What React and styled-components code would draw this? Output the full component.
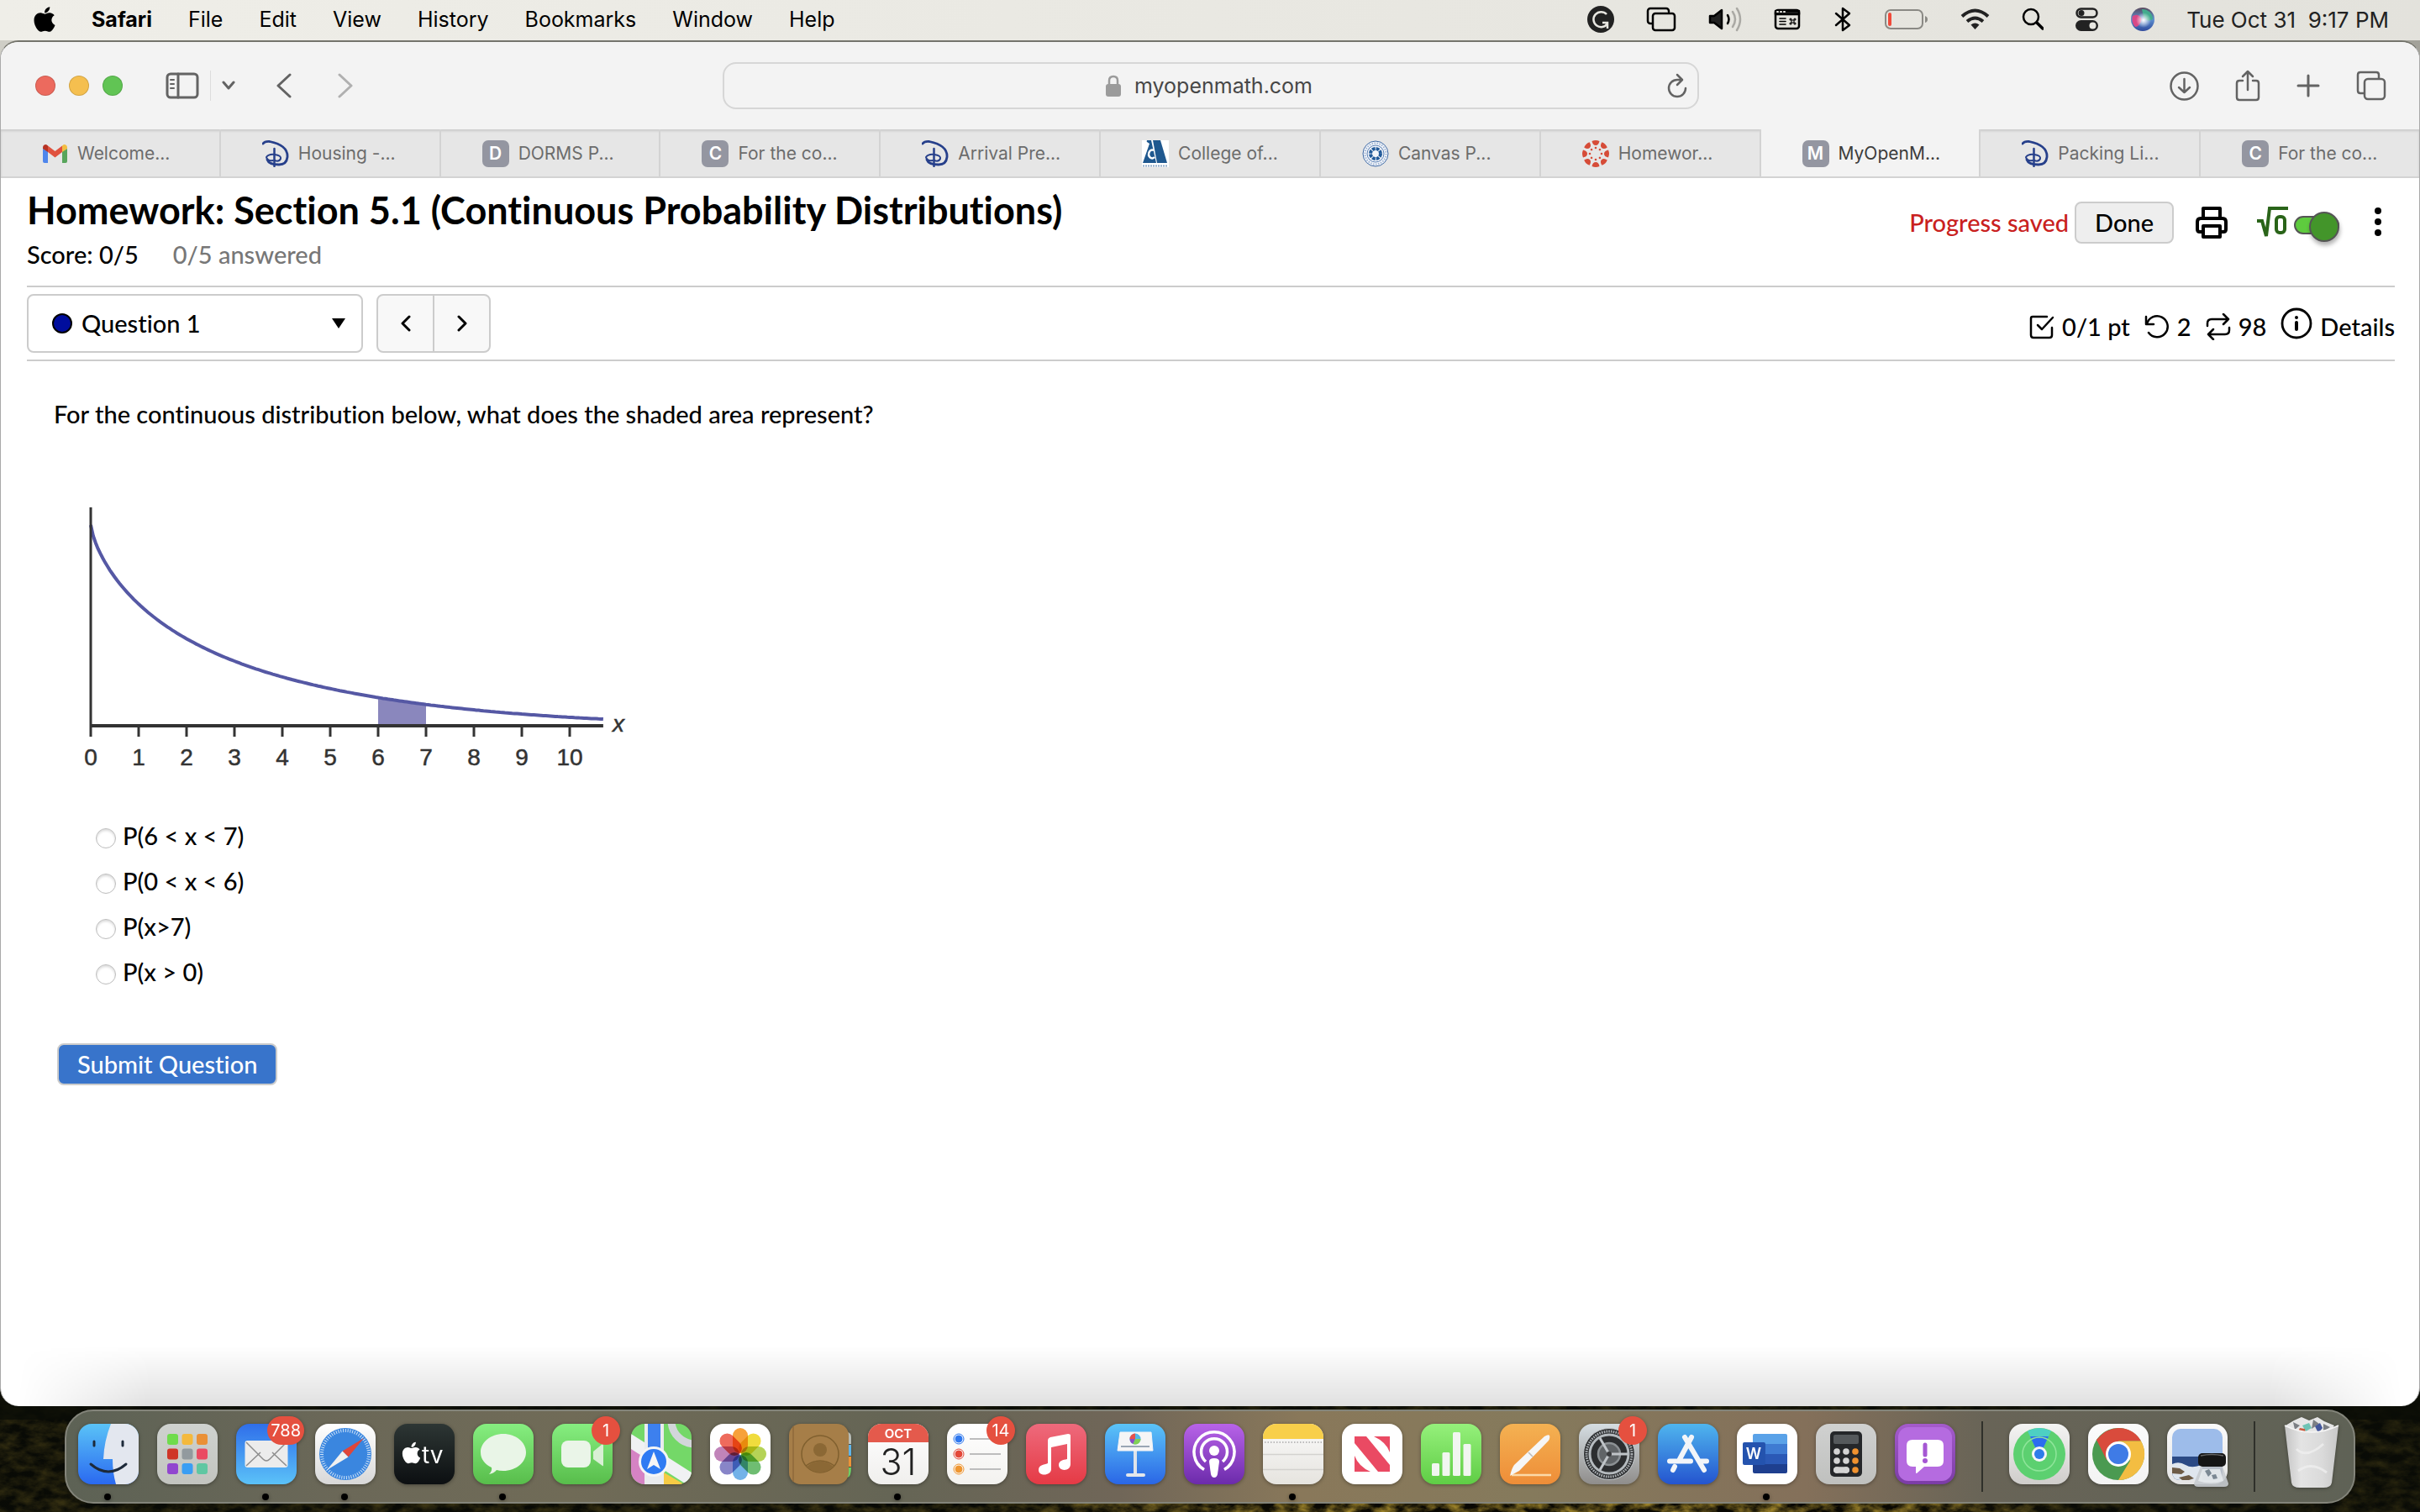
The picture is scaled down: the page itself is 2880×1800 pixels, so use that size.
import { useState } from "react";
import styled, { createGlobalStyle, css } from "styled-components";
import { FaApple } from "react-icons/fa";

const GlobalStyle = createGlobalStyle`
  * {
    box-sizing: border-box;
  }

  body {
    margin: 0;
    background: #10130a;
    font-family: "Inter", "Liberation Sans", sans-serif;
    color: #000;
  }

  button, input, select {
    font: inherit;
    color: inherit;
  }

  button {
    cursor: pointer;
  }
`;

const Desktop = styled.div`
  position: relative;
  isolation: isolate;
  min-height: 100vh;
  display: flex;
  flex-direction: column;
  background: linear-gradient(90deg, #cfcec6, #b9b8b0 60%, #a3a29a) top / 100% 80px
    no-repeat;
`;

const Wallpaper = styled.svg`
  position: absolute;
  z-index: -1;
  bottom: 0;
  left: 0;
  width: 100%;
  height: 160px;
`;

/* Menu bar */

const MenuBar = styled.header`
  height: 48px;
  padding: 0 37px 2px 40px;
  display: flex;
  align-items: center;
  justify-content: space-between;
  background: linear-gradient(90deg, #efeee8, #e3e2dc);
  font-size: 25px;
`;

const MenuGroup = styled.div`
  display: flex;
  align-items: center;
  gap: ${(props) => props.$gap}px;
  white-space: pre;
`;

const MenuItem = styled.button`
  display: flex;
  padding: 0;
  border: none;
  background: none;
  line-height: 30px;
  font-weight: ${(props) => (props.$bold ? 700 : 400)};

  & svg {
    width: 26px;
    height: 34px;
  }
`;

const Clock = styled.time`
  color: #222;
  font-size: 26px;
`;

/* Browser window */

const Window = styled.div`
  position: relative;
  flex: 1;
  display: flex;
  flex-direction: column;
  overflow: hidden;
  border: 1px solid #a9a9a9;
  border-top: 2px solid #74746c;
  border-bottom: none;
  border-radius: 22px;
  background: #fff;

  /* The dock throws a shade on the bottom of the window */
  &::after {
    content: "";
    position: absolute;
    left: 0;
    right: 0;
    bottom: 0;
    height: 72px;
    pointer-events: none;
    background: linear-gradient(rgba(0, 0, 0, 0), rgba(0, 0, 0, 0.12));
    mask-image: linear-gradient(
      90deg,
      transparent 20px,
      #000 180px,
      #000 calc(100% - 180px),
      transparent calc(100% - 20px)
    );
  }
`;

const Toolbar = styled.div`
  height: 104px;
  padding: 0 39px 0 41px;
  display: grid;
  grid-template-columns: 1fr minmax(400px, 1162px) 1fr;
  align-items: center;
  background: #f3f3f3;
  color: #636363;
`;

const ToolGroup = styled.div`
  display: flex;
  align-items: center;
  justify-content: ${(props) => (props.$end ? "flex-end" : "flex-start")};
  gap: ${(props) => props.$gap}px;
`;

const Lights = styled.div`
  display: flex;
  gap: 16px;
  margin-right: 38px;
`;

const Light = styled.button`
  width: 24px;
  height: 24px;
  padding: 0;
  border: 1px solid rgba(0, 0, 0, 0.14);
  border-radius: 50%;
  background: ${(props) => props.$color};
`;

const ToolButton = styled.button`
  display: flex;
  padding: 0;
  border: none;
  background: none;
  color: ${(props) => (props.$dim ? "#b0b0b0" : "#636363")};
`;

const ToolDivider = styled.span`
  width: 1px;
  height: 36px;
  background: #dcdcdc;
`;

const AddressBar = styled.div`
  height: 56px;
  padding: 0 10px;
  display: grid;
  grid-template-columns: 1fr auto 1fr;
  align-items: center;
  border: 2px solid #d6d6d6;
  border-radius: 16px;
`;

const Address = styled.label`
  grid-column: 2;
  display: flex;
  align-items: center;
  gap: 16px;
`;

const AddressInput = styled.input`
  width: 216px;
  padding: 0;
  border: none;
  outline: none;
  background: none;
  color: #474747;
  font-size: 25px;
  line-height: 30px;
`;

const ReloadButton = styled(ToolButton)`
  justify-self: end;
`;

const TabBar = styled.nav`
  height: 58px;
  display: flex;
  background: #e6e6e6;
  border-bottom: 2px solid #d3d3d3;
  box-shadow: inset 0 2px 3px rgba(0, 0, 0, 0.12);
`;

const Tab = styled.button`
  flex: 1 1 0;
  min-width: 0;
  display: flex;
  align-items: center;
  gap: 11px;
  padding: 2px 0 0 49px;
  border: none;
  border-right: 2px solid #d3d3d3;
  background: none;
  color: #6c6c6c;
  font-size: 21px;
  line-height: 28px;
  white-space: nowrap;

  &:last-child {
    border-right: none;
  }

  ${(props) =>
    props.$active &&
    css`
      background: #f3f3f3;
      color: #3c3c3c;
    `}
`;

const LetterIcon = styled.span`
  width: 32px;
  height: 32px;
  border-radius: 7px;
  background: #9496a1;
  color: #fff;
  font-weight: 600;
  line-height: 32px;
  text-align: center;
`;

/* Homework page */

const Page = styled.main`
  flex: 1;
  padding: 0 29px 0 31px;
  font-family: "Lato", "Liberation Sans", sans-serif;
  font-size: 29px;
  font-weight: 500;
  font-variant-ligatures: none;
  line-height: 36px;
`;

const PageHeader = styled.div`
  display: flex;
  justify-content: space-between;
  padding: 10px 0 19px;
  border-bottom: 2px solid #ccc;
`;

const Title = styled.h1`
  margin: 0 0 7px;
  font-size: 45px;
  font-weight: 700;
  line-height: 56px;
`;

const Score = styled.div`
  display: flex;
  gap: 41px;
`;

const Answered = styled.span`
  color: #777;
`;

const Actions = styled.div`
  height: 50px;
  margin-top: 18px;
  padding-right: 16px;
  display: flex;
  align-items: center;
`;

const Saved = styled.span`
  margin-right: 7px;
  color: #c9211e;
`;

const Button = styled.button`
  height: 50px;
  padding: 0 22px;
  border: 2px solid #ccc;
  border-radius: 8px;
  background: ${(props) => (props.$primary ? "#3874cb" : "#eee")};
  color: ${(props) => (props.$primary ? "#fff" : "#000")};
`;

const IconButton = styled.button`
  display: flex;
  padding: 0;
  border: none;
  background: none;
`;

const PrintButton = styled(IconButton)`
  margin: 0 35px 0 26px;
`;

const MathToggle = styled.label`
  display: flex;
  align-items: center;
  gap: 6px;
  margin-right: 42px;
`;

const Switch = styled.input`
  appearance: none;
  position: relative;
  width: 54px;
  height: 22px;
  margin: 6px 0 0;
  border: 2px solid #555;
  border-radius: 12px;
  background: #5ecb3e;

  &::before {
    content: "";
    position: absolute;
    top: -7px;
    right: -2px;
    width: 32px;
    height: 32px;
    border: 2px solid #555;
    border-radius: 50%;
    background: #43952a;
    box-shadow: 1px 4px 5px rgba(0, 0, 0, 0.3);
  }
`;

const QuestionBar = styled.div`
  display: flex;
  align-items: center;
  gap: 16px;
  padding: 8px 0;
  border-bottom: 2px solid #ccc;
`;

const QuestionPicker = styled.label`
  width: 400px;
  height: 70px;
  padding: 0 19px 0 28px;
  display: flex;
  align-items: center;
  gap: 11px;
  border: 2px solid #ccc;
  border-radius: 8px;
`;

const QuestionSelect = styled.select`
  appearance: none;
  flex: 1;
  min-width: 0;
  padding: 0;
  border: none;
  outline: none;
  background: none;
`;

const StatusDot = styled.span`
  width: 24px;
  height: 24px;
  border: 2px solid #000;
  border-radius: 50%;
  background: #000d9d;
`;

const Pager = styled.div`
  display: flex;
  height: 70px;
  border: 2px solid #ccc;
  border-radius: 8px;
  background: #f8f8f8;
`;

const PagerButton = styled.button`
  width: 65px;
  display: flex;
  align-items: center;
  justify-content: center;
  padding: 0;
  border: none;
  background: none;

  & + & {
    width: 67px;
    border-left: 2px solid #ccc;
  }
`;

const Meta = styled.div`
  margin-left: auto;
  padding-top: 8px;
  display: flex;
  align-items: center;
  gap: 17px;
`;

const MetaItem = styled.span`
  display: flex;
  align-items: center;
  gap: 9px;
`;

const DetailsLink = styled.a`
  display: flex;
  align-items: center;
  gap: 9px;
  color: inherit;
  text-decoration: none;

  & svg {
    margin-bottom: 8px;
  }
`;

const Question = styled.form`
  padding: 45px 32px 60px;
  display: flex;
  flex-direction: column;
  align-items: flex-start;
`;

const Prompt = styled.p`
  margin: 0 0 79px;
`;

const Graph = styled.svg`
  width: 700px;
  height: 330px;
  font-family: "Liberation Sans", sans-serif;
  font-size: 28px;
  font-weight: 400;
`;

const Choices = styled.ul`
  margin: 48px 0 58px;
  padding: 0 0 0 50px;
  list-style: none;
`;

const Choice = styled.label`
  height: 54px;
  display: flex;
  align-items: center;
  gap: 8px;
`;

const Radio = styled.input`
  appearance: none;
  width: 24px;
  height: 24px;
  margin: 6px 0 0;
  border: 1px solid #bdbdbd;
  border-radius: 50%;
  background: #fff;
  box-shadow: inset 0 2px 3px rgba(0, 0, 0, 0.15);

  &:checked {
    border: 7px solid #3874cb;
  }
`;

const SubmitRow = styled.div`
  padding-left: 4px;
`;

/* Dock */

const DockArea = styled.footer`
  display: flex;
  justify-content: center;
  padding: 4px 0 10px;
`;

const DockBar = styled.div`
  display: flex;
  align-items: flex-start;
  gap: 22px;
  height: 112px;
  padding: 15px 14px 0;
  border: 2px solid #83847a;
  border-radius: 34px;
  background: linear-gradient(
    90deg,
    #5d6255,
    #6b6858 12%,
    #706b57 22%,
    #656555 36%,
    #706658 46%,
    #89785a 54%,
    #857a5c 64%,
    #84705a 76%,
    #686457 84%,
    #5f6256
  );
`;

const DockItem = styled.button`
  position: relative;
  display: flex;
  width: 72px;
  height: 72px;
  padding: 0;
  border: none;
  background: none;
  filter: drop-shadow(0 1px 2px rgba(0, 0, 0, 0.35));

  & > svg {
    width: 72px;
    height: 72px;
    overflow: visible;
  }
`;

const Badge = styled.span`
  position: absolute;
  top: -9px;
  right: -9px;
  min-width: 34px;
  height: 34px;
  padding: 0 4px;
  border-radius: 17px;
  background: #e5503f;
  color: #fff;
  font-size: 20px;
  line-height: 34px;
  text-align: center;
`;

const RunningDot = styled.span`
  position: absolute;
  left: 31px;
  bottom: -19px;
  width: 8px;
  height: 8px;
  border-radius: 50%;
  background: #000;
`;

const DockDivider = styled.span`
  width: 2px;
  height: 84px;
  margin: -3px 9px 0;
  background: #2f302a;
`;

/* Small line icons */

function Line({ w, h, box, stroke = 3, children }) {
  return (
    <svg
      width={w}
      height={h}
      viewBox={box || `0 0 ${w} ${h}`}
      fill="none"
      stroke="currentColor"
      strokeWidth={stroke}
      strokeLinecap="round"
      strokeLinejoin="round"
      aria-hidden="true"
    >
      {children}
    </svg>
  );
}

function StatusIcons() {
  return (
    <>
      <svg width="32" height="32" viewBox="0 0 32 32">
        <circle cx="16" cy="16" r="16" fill="#222" />
        <path
          d="M23 10A9 9 0 1 0 24 21M24 27V20H18"
          fill="none"
          stroke="#e8e7e1"
          strokeWidth="2.5"
        />
      </svg>
      <Line w={36} h={30} stroke={2.5}>
        <path d="M7 20H5a3 3 0 0 1-3-3V5a3 3 0 0 1 3-3h19a3 3 0 0 1 3 3v1" />
        <rect x="8" y="8" width="26" height="20" rx="3" />
      </Line>
      <Line w={40} h={30} stroke={2.5}>
        <path d="M2 11h5l9-7v22l-9-7H2z" fill="#222" />
        <path d="M23 10q3 5 0 10" />
        <path d="M29 6q6 9 0 18M34 2q8 13 0 26" stroke="#aaa9a4" />
      </Line>
      <Line w={32} h={26} stroke={2.5}>
        <rect x="2" y="2" width="28" height="22" rx="3" />
        <path d="M2 3h28v4H2z" fill="#222" />
        <path d="M4 4h1M8 4h1M12 4h1" stroke="#e8e7e1" strokeWidth="2" />
        <path d="M7 12h7M7 15.5h7M7 19h7" strokeWidth="1.6" />
        <path
          d="M21 14h3v3h-3zM21 14v-1a1 1 0 1 0-1 1zM24 14h1a1 1 0 1 0-1-1zM24 17v1a1 1 0 1 0 1-1zM21 17h-1a1 1 0 1 0 1 1z"
          strokeWidth="1.1"
        />
      </Line>
      <Line w={24} h={30} stroke={2.5}>
        <path d="M4 8 20 22 12 28V2L20 8 4 22" />
      </Line>
      <svg width="52" height="26" viewBox="0 0 52 26">
        <rect x="1" y="2" width="44" height="22" rx="6" fill="none" stroke="#8a8984" strokeWidth="2" />
        <path d="M48 9q3 1 3 4t-3 4z" fill="#8a8984" />
        <rect x="4" y="5" width="4" height="16" rx="2" fill="#f04a3a" />
      </svg>
      <svg width="35" height="26" viewBox="0 0 35 26" fill="none" stroke="#222" strokeWidth="4">
        <path d="M2 9.500q15.500-14 31 0M8 15.500q9.500-8 19 0" />
        <path d="M12.500 19.500q5-4 10 0l-5 5.500z" fill="#222" stroke="none" />
      </svg>
      <Line w={26} h={28} stroke={2.5}>
        <circle cx="11" cy="11" r="9" />
        <path d="m18 18 7 7" strokeWidth="3.5" />
      </Line>
      <svg width="28" height="28" viewBox="0 0 28 28">
        <rect x="1.5" y="1.5" width="24" height="10" rx="5" fill="none" stroke="#222" strokeWidth="2.5" />
        <circle cx="7" cy="6.5" r="3.5" fill="#222" />
        <rect x="0" y="15" width="27" height="13" rx="6.5" fill="#222" />
        <circle cx="20.5" cy="21.5" r="4" fill="#e8e7e1" />
      </svg>
      <svg width="28" height="28" viewBox="0 0 28 28">
        <defs>
          <linearGradient id="siri" x1="0" y1="0" x2="0" y2="1">
            <stop offset="0" stopColor="#5a4a5e" />
            <stop offset="0.5" stopColor="#5d8fd0" />
            <stop offset="1" stopColor="#2f4a9c" />
          </linearGradient>
          <radialGradient id="siriGlow">
            <stop offset="0" stopColor="#fff" />
            <stop offset="1" stopColor="#fff" stopOpacity="0" />
          </radialGradient>
        </defs>
        <circle cx="14" cy="14" r="14" fill="url(#siri)" />
        <path d="M13 2a12 12 0 0 1 13 12q-7 4-11-3z" fill="#43ab8e" />
        <path d="M2 10q7-4 11 4-3 9-8 9-5-6-3-13z" fill="#d84886" />
        <circle cx="15" cy="15" r="9" fill="url(#siriGlow)" />
      </svg>
    </>
  );
}

/* Tab icons */

function Gmail() {
  return (
    <svg width="31" height="32" viewBox="0 0 31 32">
      <path d="M1 10v15a2 2 0 0 0 2 2h4V13z" fill="#4f86ec" />
      <path d="M30 10v15a2 2 0 0 1-2 2h-4V13z" fill="#58a55c" />
      <path d="M7 6.500 15.500 13 24 6.500V14L15.500 20.500 7 14z" fill="#e0523f" />
      <path d="M1 9q0-4 4-4l2 1.500V14L1 10z" fill="#b63324" />
      <path d="M30 9q0-4-4-4l-2 1.500V14l6-4z" fill="#f2bd42" />
    </svg>
  );
}

function Disney() {
  return (
    <svg width="32" height="32" viewBox="0 0 32 32" fill="none" stroke="#27408b" strokeLinecap="round">
      <path d="M1 4Q3 1 9 1.500 31 6 30 20 29 29 20 29 8 29 6 23" strokeWidth="2.8" />
      <path d="M14.500 10v21" strokeWidth="2.5" />
      <path d="M5 20q3-4 10-3 8 1 7 5-2 4-7 2M5 20q1 5 8 4" strokeWidth="2" />
    </svg>
  );
}

function College() {
  return (
    <svg width="32" height="32" viewBox="0 0 32 32">
      <path d="M0 0h32v32H0z" fill="#fff" />
      <path d="M13 0h9l8 27H18z" fill="#1f588f" />
      <path d="M3 0h8l6 27H1L9 4z" fill="#1f588f" />
      <path d="M0 0h6L1 22z" fill="#fff" />
      <path d="M14 12a4 5 0 1 0 1 8" fill="none" stroke="#fff" strokeWidth="2.5" />
      <path d="M1 30.500h30" stroke="#8fa9c6" strokeWidth="2" strokeDasharray="2 1" />
    </svg>
  );
}

function Seal() {
  return (
    <svg width="32" height="32" viewBox="0 0 32 32" fill="none">
      <circle cx="16" cy="16" r="15" fill="#f2f5fa" stroke="#3f69a4" />
      <circle cx="16" cy="16" r="12.5" stroke="#9db3d2" strokeWidth="2" strokeDasharray="1.5 1.5" />
      <circle cx="16" cy="16" r="10" stroke="#5a80b5" />
      <circle cx="16" cy="16" r="6" stroke="#225a9a" strokeWidth="4" strokeDasharray="3.7 1" />
    </svg>
  );
}

function Canvas() {
  const spokes = [0, 45, 90, 135, 180, 225, 270, 315];
  return (
    <svg width="32" height="32" viewBox="0 0 32 32" fill="#d64c38">
      {spokes.map((a) => (
        <g key={a} transform={`rotate(${a} 16 16)`}>
          <path d="M11.500 1Q16-1 20.500 1 19.500 6 16 6T11.500 1z" />
          <circle cx="16" cy="9" r="1.3" />
        </g>
      ))}
    </svg>
  );
}

/* Distribution graph */

const UNIT = 57;
const ORIGIN = { x: 44, y: 274 };
const END = 10.7;

const plotX = (v) => ORIGIN.x + v * UNIT;
const plotY = (v) =>
  ORIGIN.y - 239 * Math.exp(-0.5 * Math.pow(v, 0.735) - 0.00045 * v * v * v);

function curve(from, to) {
  const points = [];
  for (let v = from; v < to; v += 0.05) {
    points.push(`${plotX(v).toFixed(1)},${plotY(v).toFixed(1)}`);
  }
  points.push(`${plotX(to).toFixed(1)},${plotY(to).toFixed(1)}`);
  return `M${points.join("L")}`;
}

function DistributionGraph() {
  const ticks = Array.from({ length: 11 }, (_, i) => i);
  return (
    <Graph viewBox="0 0 700 330" role="img" aria-label="x">
      <path d={`${curve(6, 7)}V${ORIGIN.y}H${plotX(6)}z`} fill="#8a87bd" />
      <path d={curve(0, END)} fill="none" stroke="#5558a4" strokeWidth="4" />
      <g stroke="#333" strokeWidth="3">
        <path d={`M${ORIGIN.x} 14V${ORIGIN.y}`} fill="none" />
        <path d={`M${ORIGIN.x} ${ORIGIN.y}H${plotX(END)}`} strokeWidth="4" />
        {ticks.map((t) => (
          <path key={t} d={`M${plotX(t)} 274v13`} />
        ))}
      </g>
      <g fill="#333" stroke="#333" strokeWidth="0.5">
        {ticks.map((t) => (
          <text key={t} x={plotX(t)} y="321" textAnchor="middle">
            {t}
          </text>
        ))}
        <text x="665" y="281" fontStyle="italic">
          x
        </text>
      </g>
    </Graph>
  );
}

/* Dock icons, all on a 72px tile */

function Tile({ from, to = from, id, children }) {
  return (
    <svg viewBox="0 0 72 72">
      <defs>
        <linearGradient id={id} x1="0" y1="0" x2="0" y2="1">
          <stop offset="0" stopColor={from} />
          <stop offset="1" stopColor={to} />
        </linearGradient>
        <clipPath id={`${id}-clip`}>
          <rect width="72" height="72" rx="16" />
        </clipPath>
      </defs>
      <rect width="72" height="72" rx="16" fill={`url(#${id})`} />
      {children}
    </svg>
  );
}

const Finder = () => (
  <Tile id="finder" from="#5ac3f7" to="#2a69f0">
    <path
      d="M39 0Q31 20 30 42h11q0 16 4 30h27V0z"
      fill="#e3e7ef"
      clipPath="url(#finder-clip)"
    />
    <g fill="none" stroke="#1d2a3a" strokeWidth="3" strokeLinecap="round">
      <path d="M19 21v5M53 21v5" />
      <path d="M15 48q21 18 42 0" />
    </g>
  </Tile>
);

const Launchpad = () => {
  const colors = [
    "#6fdc4c", "#f4b93c", "#ea9036",
    "#cf3527", "#929a9e", "#ea4b62",
    "#9146cf", "#3a9ef3", "#5fc7a2",
  ];
  return (
    <Tile id="launchpad" from="#cfd2cf" to="#c2c4bf">
      {colors.map((c, i) => (
        <rect
          key={c}
          x={12 + (i % 3) * 17.5}
          y={12 + Math.floor(i / 3) * 17.5}
          width="13"
          height="13"
          rx="3"
          fill={c}
        />
      ))}
    </Tile>
  );
};

const Mail = () => (
  <Tile id="mail" from="#2f6eea" to="#5bc2f8">
    <rect x="10.5" y="20" width="51" height="32" rx="3" fill="#ececec" />
    <path
      d="m12 50 17-16M60 50 43 34M12 22l20 20q4 4 8 0l20-20"
      fill="none"
      stroke="#8d8d8d"
      strokeWidth="1.5"
    />
  </Tile>
);

const SafariIcon = () => (
  <Tile id="safari" from="#fff" to="#d8d8d8">
    <circle cx="36" cy="36" r="31" fill="#3a86df" />
    <circle cx="36" cy="36" r="28" fill="none" stroke="#cfe3f8" strokeWidth="4" strokeDasharray="1 1.8" />
    <path d="m58 17-25.500 15.500 7 7z" fill="#e0463a" />
    <path d="m14 55 18.500-22.500 7 7z" fill="#f0f0f0" />
  </Tile>
);

const TvIcon = () => (
  <Tile id="tv" from="#2d3634" to="#0c0f11">
    <FaApple x="6" y="20" size={29} color="#fff" />
    <text x="33" y="47" fill="#fff" fontSize="28">
      tv
    </text>
  </Tile>
);

const Messages = () => (
  <Tile id="messages" from="#86ee80" to="#58bd4b">
    <path d="M36 12c15 0 27 10 27 22S51 56 36 56q-5 0-8-1-3 4-9 5 4-4 3-8C14 48 9 42 9 34c0-12 12-22 27-22z" fill="#e9f5e7" />
  </Tile>
);

const FaceTime = () => (
  <Tile id="facetime" from="#86ee80" to="#58bd4b">
    <rect x="11" y="20" width="35" height="32" rx="8" fill="#eaf5e8" />
    <path d="M49 33 60 24q1 0 1 2v23q0 2-1 1L49 42z" fill="#d8efd4" />
  </Tile>
);

const MapsIcon = () => (
  <Tile id="maps" from="#74d868">
    <g clipPath="url(#maps-clip)">
      <path d="M0 28 72 84H0z" fill="#d583c4" />
      <path d="M0 12 72 58v18L0 30z" fill="#f0f1f3" />
      <path d="M16 0h23v72H16z" fill="#e9ebee" />
      <path d="M39 58l24 14H39z" fill="#f6cb45" />
      <path d="M20 0h15v40H20z" fill="#3d80ee" />
      <circle cx="76" cy="-4" r="28" fill="none" stroke="#d2d6da" strokeWidth="9" />
    </g>
    <circle cx="27" cy="45" r="18" fill="#f4f5f6" />
    <circle cx="27" cy="45" r="15" fill="#2f7bf3" />
    <path d="m27 33 8 21-8-5-8 5z" fill="#f6f6f6" />
  </Tile>
);

const PetalGroup = styled.g`
  isolation: isolate;

  & rect {
    mix-blend-mode: multiply;
  }
`;

const Photos = () => {
  const petals = [
    "#f7a13a", "#f0dc3d", "#b5d356", "#6fbd72",
    "#73b2e8", "#8885c8", "#c184b9", "#ee6b5c",
  ];
  return (
    <Tile id="photos" from="#fff">
      <PetalGroup>
        {petals.map((c, i) => (
          <rect
            key={c}
            x="27"
            y="5"
            width="18"
            height="30"
            rx="9"
            fill={c}
            transform={`rotate(${i * 45} 36 36)`}
          />
        ))}
      </PetalGroup>
    </Tile>
  );
};

const Contacts = () => (
  <svg viewBox="0 0 72 72">
    <path d="M60 10h10q4 1 4 6v8H60z" fill="#b7bcb6" />
    <path d="M60 25h14v13H60z" fill="#5fb4e8" />
    <path d="M60 39h14v12H60z" fill="#ed9337" />
    <path d="M60 52h14q0 12-5 12h-9z" fill="#6ccf65" />
    <rect width="71" height="72" rx="14" fill="#a67e48" />
    <path d="M5 3v66" stroke="#8e6a3b" strokeWidth="1.5" />
    <g fill="none" stroke="#80602f" strokeWidth="1.5">
      <circle cx="37" cy="36" r="22" />
      <path d="M20 50q17-12 34 0" />
    </g>
    <circle cx="37" cy="31" r="8" fill="#8b6835" />
    <path d="M21 51q16-13 32 0-16 14-32 0z" fill="#8b6835" />
  </svg>
);

const CalendarIcon = () => (
  <Tile id="calendar" from="#fff" to="#f0efed">
    <path d="M0 0h72v22H0z" fill="#e45a4c" clipPath="url(#calendar-clip)" />
    <text x="36" y="17" textAnchor="middle" fill="#fff" fontSize="15" fontWeight="600">
      OCT
    </text>
    <text x="36" y="61" textAnchor="middle" fill="#222" fontSize="43" fontWeight="300">
      31
    </text>
  </Tile>
);

const Reminders = () => (
  <Tile id="reminders" from="#fff" to="#f3f2ef">
    {["#2f78ee", "#e34839", "#ee9632"].map((c, i) => (
      <g key={c}>
        <circle cx="14" cy={18 + i * 18} r="5" fill={c} stroke="#fff" />
        <circle cx="14" cy={18 + i * 18} r="6" fill="none" stroke={c} />
        <path d={`M27 ${18 + i * 18}h37`} stroke="#bdbdbd" strokeWidth="2" />
      </g>
    ))}
  </Tile>
);

const Music = () => (
  <Tile id="music" from="#ee6a7c" to="#e53a45">
    <path
      d="M26 20q0-3 3-4l21-4q3 0 3 2v34c0 9-14 9-14 1 0-5 5-6 10-7V24l-19 4v26c0 8-15 9-15 1 0-6 6-6 11-8z"
      fill="#fff"
    />
  </Tile>
);

const Keynote = () => (
  <Tile id="keynote" from="#5bc4f8" to="#2a66e6">
    <path d="M36 32v28" stroke="#dfe4ea" strokeWidth="4" />
    <rect x="25" y="59" width="23" height="4" rx="2" fill="#e4e7eb" />
    <path d="M18 10h37l2 22H15z" fill="#f5f5f6" stroke="#f5f5f6" strokeWidth="1" />
    <path d="M19 27h34" stroke="#9aa5b4" strokeWidth="2" />
    <circle cx="36" cy="18" r="6.5" fill="#50b6e8" />
    <path d="M36 18v-6.500a6.500 6.500 0 0 0-6.500 6.500z" fill="#e6504a" />
    <path d="M36 18h-6.500a6.500 6.500 0 0 0 4 6z" fill="#8a4cc6" />
    <path d="M36 18l-2.500 6a6.500 6.500 0 0 0 9-6z" fill="#82cf55" />
  </Tile>
);

const PodcastsIcon = () => (
  <Tile id="podcasts" from="#b863e8" to="#6c2bab">
    <g fill="none" stroke="#fff" strokeWidth="3.5">
      <path d="M24 54.500a24 24 0 1 1 24 0" />
      <path d="M26 45a15.500 15.500 0 1 1 20 0" />
    </g>
    <circle cx="36" cy="32" r="6" fill="#fff" />
    <path d="M30 45q0-4 6-4t6 4l-2 15q-1 4-4 4t-4-4z" fill="#fff" />
  </Tile>
);

const Notes = () => (
  <Tile id="notes" from="#fafafa" to="#e6e4df">
    <path d="M0 0h72v18H0z" fill="#f8cf4a" clipPath="url(#notes-clip)" />
    <path d="M0 36.500h72M0 54.500h72" stroke="#d3d2cf" strokeWidth="1.5" />
    <path d="M2 22h68" stroke="#bbb" strokeWidth="2" strokeDasharray="1.5 2" />
  </Tile>
);

const News = () => (
  <Tile id="news" from="#fff">
    <path d="M15 15h14l28 34v8H43L15 23z" fill="#ea4a63" />
    <path d="M38 15h19v19Q53 22 38 15zM15 38v19h19Q20 51 15 38z" fill="#ea4a63" />
  </Tile>
);

const Numbers = () => (
  <Tile id="numbers" from="#95f07b" to="#5fcd45">
    <g fill="#f1f6f0">
      <rect x="13" y="47" width="9" height="15" rx="1.5" />
      <rect x="25.5" y="34" width="9" height="28" rx="1.5" />
      <rect x="38" y="10" width="9" height="52" rx="1.5" />
      <rect x="50.5" y="24" width="9" height="38" rx="1.5" />
    </g>
  </Tile>
);

const Pages = () => (
  <Tile id="pages" from="#f4b152" to="#ee8d38">
    <path d="M14 61h47" stroke="#fbd9a8" strokeWidth="2.5" />
    <path d="M12 62q2-9 5-13l36-34q5-3 6-1t-1 6L23 56z" fill="#f6f6f6" />
    <path d="m34 34 5 5" stroke="#b9b9b9" strokeWidth="1.5" />
  </Tile>
);

const Settings = () => (
  <Tile id="settings" from="#d5dde2" to="#8f8d8b">
    <circle cx="36" cy="36" r="30.5" fill="#2c2e30" stroke="#c3c8cb" strokeWidth="1" />
    <circle cx="36" cy="36" r="27" fill="none" stroke="#a8adb1" strokeWidth="3" strokeDasharray="1.6 1.2" />
    <circle cx="36" cy="36" r="23" fill="none" stroke="#b4babe" strokeWidth="3" />
    <circle cx="36" cy="36" r="13" fill="#606467" stroke="#8c9194" strokeWidth="2.5" />
    <path d="M36 36h22M36 36 25 17M36 36 25 55" stroke="#bfc4c8" strokeWidth="3" />
    <circle cx="36" cy="36" r="3" fill="#3a3c3e" />
  </Tile>
);

const AppStore = () => (
  <Tile id="appstore" from="#4fb5ee" to="#2454cf">
    <g stroke="#f2f5f9" strokeWidth="6" strokeLinecap="round">
      <path d="M40 16 26 42M32 16l23 39M14 44.500h25M50 44.500h8M20 51l-2 4" />
    </g>
  </Tile>
);

const Word = () => (
  <Tile id="word" from="#fff">
    <path d="M19 14q0-2 2-2h37q2 0 2 2v10H19z" fill="#5aa2e8" />
    <path d="M19 24h41v12H19z" fill="#3f7bd2" />
    <path d="M19 36h41v12H19z" fill="#2b59b6" />
    <path d="M19 48h41v9q0 2-2 2H21q-2 0-2-2z" fill="#1e3f8f" />
    <rect x="7" y="22" width="27" height="27" rx="2" fill="#2453ae" />
    <text x="20" y="42" textAnchor="middle" fill="#fff" fontSize="18" fontWeight="600">
      W
    </text>
  </Tile>
);

const CalculatorIcon = () => (
  <Tile id="calculator" from="#d0d1d0" to="#bfc0be">
    <rect x="17" y="9" width="38" height="54" rx="5" fill="#25272a" />
    <rect x="21" y="13" width="30" height="11" rx="2" fill="#55595c" />
    {[33, 44, 55].map((y) => (
      <g key={y}>
        <circle cx="25" cy={y} r="3.8" fill="#d4d4d4" />
        <circle cx="36" cy={y} r="3.8" fill="#d4d4d4" />
        <circle cx="47" cy={y} r="3.8" fill="#f0922f" />
      </g>
    ))}
    <rect x="21" y="51.2" width="19" height="7.6" rx="3.8" fill="#d4d4d4" />
  </Tile>
);

const Feedback = () => (
  <Tile id="feedback" from="#a45bcb" to="#7b3ca6">
    <rect x="4" y="4" width="64" height="64" rx="12" fill="#b56be0" />
    <path d="M21 19h30q7 0 7 7v18q0 7-7 7H35l-9 8q-1 0-1-1v-7h-4q-7 0-7-7V26q0-7 7-7z" fill="#fff" />
    <path d="M36 25v12" stroke="#a557d3" strokeWidth="5" strokeLinecap="round" />
    <circle cx="36" cy="44" r="3" fill="#a557d3" />
  </Tile>
);

const FindMy = () => (
  <Tile id="findmy" from="#f4f4f3" to="#cfcdcb">
    <circle cx="36" cy="36" r="31" fill="#5cd070" />
    <path d="M22 8.500q14-7 28 0L41 28H31z" fill="#4dd0c3" />
    <path d="M25 15h22l-6 13H31z" fill="#2b6df0" />
    <circle cx="36" cy="36" r="20" fill="none" stroke="#8fe59a" strokeWidth="1.5" />
    <circle cx="36" cy="36" r="9" fill="#f5f6f8" />
    <circle cx="36" cy="36" r="6" fill="#2e7de9" />
  </Tile>
);

const Chrome = () => (
  <Tile id="chrome" from="#fbfbfb" to="#f3f3f3">
    <circle cx="36" cy="36" r="31" fill="#4b9a51" />
    <path d="M10 19q12-14 26-14 18 0 27 15.500H36L22 43z" fill="#d94b3c" />
    <path d="M36 20.500h27A31 31 0 0 1 36 67l14-23z" fill="#f3bd42" />
    <circle cx="36" cy="36" r="15" fill="#fff" />
    <circle cx="36" cy="36" r="12" fill="#3f7be6" />
  </Tile>
);

const Preview = () => (
  <Tile id="preview" from="#fafafa" to="#e4e4e4">
    <rect x="6" y="6" width="60" height="61" rx="10" fill="#9dbcea" />
    <path d="M6 39h60v20q0 8-9 8H16q-10 0-10-10z" fill="#2b4a85" />
    <path d="M6 48q8-4 16 1t20-1v19H16q-10 0-10-10z" fill="#dfe6ee" />
    <path d="M6 52l9 1 6 4-4 3-11-1zM14 64l12-3 6 4-6 2H18z" fill="#6d5b46" />
    <path d="M40 51h26l7 20q0 4-5 4H37q-5 0-5-4z" fill="#c7cbcf" fillOpacity="0.9" />
    <path d="M42 54h21l4 14q-15 5-30 0z" fill="#e9edf0" fillOpacity="0.8" />
    <path d="m45 56 5-2 3 5-4 4zM53 61l5-1 2 5-5 1z" fill="#7b8893" />
    <rect x="37" y="35" width="33" height="16" rx="5" fill="#151515" />
    <path d="M40 38q13-3 27 0" stroke="#666" strokeWidth="1.5" fill="none" />
  </Tile>
);

const Trash = () => (
  <svg viewBox="0 0 72 72">
    <defs>
      <linearGradient id="trash" x1="0" y1="0" x2="1" y2="0">
        <stop offset="0" stopColor="#c4c4c4" />
        <stop offset="0.3" stopColor="#e4e4e4" />
        <stop offset="0.7" stopColor="#dadada" />
        <stop offset="1" stopColor="#c8c8c8" />
      </linearGradient>
    </defs>
    <path d="M5 2 15-4l9-4 9 4 10-4 8 5 12 5-6 9H12z" fill="#e6e6e6" />
    <path d="m14-2 8 4-6 5zM38-5l7 5-9 6zM50 0l8 4-8 5z" fill="#7c7f84" />
    <path d="m25 2 8-3 3 6-7 4z" fill="#6fc3b4" />
    <path d="m22 5 6 1 1 6-9-3z" fill="#c9593d" />
    <path d="m40 3 6-4 3 6-5 6z" fill="#43569b" />
    <path d="M4 2q32 16 64 0l-8 68q-1 6-10 6H22q-9 0-10-6z" fill="url(#trash)" />
    <path d="M4 2q32 16 64 0" fill="none" stroke="#f5f5f5" strokeWidth="1.5" />
    <path d="M18 30q12 12 32-6M20 56q16-12 34 2" fill="none" stroke="#f1f1f1" strokeWidth="3" opacity="0.7" />
  </svg>
);

const dockApps = [
  { name: "Finder", Icon: Finder, running: true },
  { name: "Launchpad", Icon: Launchpad },
  { name: "Mail", Icon: Mail, badge: "788", running: true },
  { name: "Safari", Icon: SafariIcon, running: true },
  { name: "TV", Icon: TvIcon },
  { name: "Messages", Icon: Messages, running: true },
  { name: "FaceTime", Icon: FaceTime, badge: "1" },
  { name: "Maps", Icon: MapsIcon },
  { name: "Photos", Icon: Photos },
  { name: "Contacts", Icon: Contacts },
  { name: "Calendar", Icon: CalendarIcon, running: true },
  { name: "Reminders", Icon: Reminders, badge: "14" },
  { name: "Music", Icon: Music },
  { name: "Keynote", Icon: Keynote },
  { name: "Podcasts", Icon: PodcastsIcon },
  { name: "Notes", Icon: Notes, running: true },
  { name: "News", Icon: News },
  { name: "Numbers", Icon: Numbers },
  { name: "Pages", Icon: Pages },
  { name: "System Settings", Icon: Settings, badge: "1" },
  { name: "App Store", Icon: AppStore },
  { name: "Word", Icon: Word, running: true },
  { name: "Calculator", Icon: CalculatorIcon },
  { name: "Feedback Assistant", Icon: Feedback },
];

const dockRecent = [
  { name: "Find My", Icon: FindMy },
  { name: "Chrome", Icon: Chrome },
  { name: "Preview", Icon: Preview },
];

const menus = ["File", "Edit", "View", "History", "Bookmarks", "Window", "Help"];

const tabs = [
  { icon: <Gmail />, label: "Welcome..." },
  { icon: <Disney />, label: "Housing -..." },
  { icon: <LetterIcon>D</LetterIcon>, label: "DORMS P..." },
  { icon: <LetterIcon>C</LetterIcon>, label: "For the co..." },
  { icon: <Disney />, label: "Arrival Pre..." },
  { icon: <College />, label: "College of..." },
  { icon: <Seal />, label: "Canvas P..." },
  { icon: <Canvas />, label: "Homewor..." },
  { icon: <LetterIcon>M</LetterIcon>, label: "MyOpenM...", active: true },
  { icon: <Disney />, label: "Packing Li..." },
  { icon: <LetterIcon>C</LetterIcon>, label: "For the co..." },
];

const choices = ["P(6 < x < 7)", "P(0 < x < 6)", "P(x>7)", "P(x > 0)"];

function DockApp({ app }) {
  const { name, Icon, badge, running } = app;
  return (
    <DockItem type="button" aria-label={name}>
      <Icon />
      {badge && <Badge>{badge}</Badge>}
      {running && <RunningDot />}
    </DockItem>
  );
}

function Dock() {
  return (
    <DockArea>
      <DockBar>
        {dockApps.map((app) => (
          <DockApp key={app.name} app={app} />
        ))}
        <DockDivider />
        {dockRecent.map((app) => (
          <DockApp key={app.name} app={app} />
        ))}
        <DockDivider />
        <DockApp app={{ name: "Trash", Icon: Trash }} />
      </DockBar>
    </DockArea>
  );
}

function BrowserToolbar() {
  return (
    <Toolbar>
      <ToolGroup $gap={13}>
        <Lights>
          <Light aria-label="Close" $color="#ec6a5e" />
          <Light aria-label="Minimize" $color="#f5bf4f" />
          <Light aria-label="Zoom" $color="#61c454" />
        </Lights>
        <ToolButton aria-label="Sidebar">
          <Line w={40} h={32} stroke={3}>
            <rect x="2" y="2" width="36" height="28" rx="4" />
            <path d="M15 2v28" />
            <path d="M6 9h4M6 14h4M6 19h4" strokeWidth="2" />
          </Line>
        </ToolButton>
        <ToolDivider />
        <ToolButton aria-label="Tab groups">
          <Line w={16} h={12} stroke={3}>
            <path d="m2 2 6 7 6-7" />
          </Line>
        </ToolButton>
        <ToolGroup $gap={55}>
          <ToolButton aria-label="Back">
            <Line w={54} h={32} box="-36 0 54 32" stroke={3}>
              <path d="M16 3 2 16l14 13" />
            </Line>
          </ToolButton>
          <ToolButton aria-label="Forward" $dim>
            <Line w={18} h={32} stroke={3}>
              <path d="m2 3 14 13L2 29" />
            </Line>
          </ToolButton>
        </ToolGroup>
      </ToolGroup>
      <AddressBar>
        <Address>
          <svg width="18" height="26" viewBox="0 0 18 26" aria-hidden="true">
            <rect y="11" width="18" height="15" rx="3" fill="#9b9b9b" />
            <path d="M4 12V7q0-5 5-5t5 5v5" fill="none" stroke="#9b9b9b" strokeWidth="2.5" />
          </svg>
          <AddressInput aria-label="Address" defaultValue="myopenmath.com" />
        </Address>
        <ReloadButton aria-label="Reload">
          <Line w={26} h={30} stroke={2.5}>
            <path d="M22 18a10 10 0 1 1-10-10h5M12 2l6 6-6 6" />
          </Line>
        </ReloadButton>
      </AddressBar>
      <ToolGroup $end $gap={43}>
        <ToolButton aria-label="Downloads">
          <Line w={35} h={35} stroke={2.5}>
            <circle cx="17.5" cy="17.5" r="16" />
            <path d="M17.500 9v16M11 19l6.500 6 6.500-6" />
          </Line>
        </ToolButton>
        <ToolButton aria-label="Share">
          <Line w={30} h={38} stroke={2.5}>
            <path d="M9 13H5q-3 0-3 3v17q0 3 3 3h20q3 0 3-3V16q0-3-3-3h-4M15 24V2M9 8l6-6 6 6" />
          </Line>
        </ToolButton>
        <ToolButton aria-label="New tab">
          <Line w={28} h={28} stroke={3}>
            <path d="M14 2v24M2 14h24" />
          </Line>
        </ToolButton>
        <ToolButton aria-label="Tab overview">
          <Line w={36} h={36} stroke={2.5}>
            <path d="M9 27H5q-3 0-3-3V5q0-3 3-3h19q3 0 3 3v4" />
            <rect x="10" y="10" width="24" height="24" rx="4" />
          </Line>
        </ToolButton>
      </ToolGroup>
    </Toolbar>
  );
}

function HomeworkPage() {
  const [answer, setAnswer] = useState(null);
  return (
    <Page>
      <PageHeader>
        <div>
          <Title>Homework: Section 5.1 (Continuous Probability Distributions)</Title>
          <Score>
            <span>Score: 0/5</span>
            <Answered>0/5 answered</Answered>
          </Score>
        </div>
        <Actions>
          <Saved>Progress saved</Saved>
          <Button type="button">Done</Button>
          <PrintButton aria-label="Print">
            <Line w={38} h={38} stroke={4}>
              <path d="M9 14V2h20v12M9 30H5q-3 0-3-3v-9q0-4 4-4h26q4 0 4 4v9q0 3-3 3h-4" />
              <path d="M9 23h20v13H9z" />
            </Line>
          </PrintButton>
          <MathToggle>
            <svg width="38" height="38" viewBox="0 0 38 38" fill="none" stroke="#2a6419" strokeWidth="4">
              <path d="M0 17h6l5 18 4-33h22" />
              <rect x="23" y="12" width="10" height="19" rx="4" />
            </svg>
            <Switch type="checkbox" role="switch" aria-label="Equation editor" defaultChecked />
          </MathToggle>
          <IconButton aria-label="More">
            <svg width="8" height="36" viewBox="0 0 8 36">
              <circle cx="4" cy="4" r="4" />
              <circle cx="4" cy="17" r="4" />
              <circle cx="4" cy="30" r="4" />
            </svg>
          </IconButton>
        </Actions>
      </PageHeader>
      <QuestionBar>
        <QuestionPicker>
          <StatusDot />
          <QuestionSelect aria-label="Question">
            <option>Question 1</option>
          </QuestionSelect>
          <svg width="16" height="12" viewBox="0 0 16 12" aria-hidden="true">
            <path d="M0 0h16L8 12z" />
          </svg>
        </QuestionPicker>
        <Pager>
          <PagerButton aria-label="Previous question">
            <Line w={12} h={20} stroke={3}>
              <path d="m10 2-8 8 8 8" />
            </Line>
          </PagerButton>
          <PagerButton aria-label="Next question">
            <Line w={12} h={20} stroke={3}>
              <path d="m2 2 8 8-8 8" />
            </Line>
          </PagerButton>
        </Pager>
        <Meta>
          <MetaItem>
            <Line w={30} h={30} stroke={2.5}>
              <path d="M21 3H4q-2 0-2 2v20q0 3 3 3h19q3 0 3-3v-9M10 13l5 5L28 4" />
            </Line>
            0/1 pt
          </MetaItem>
          <MetaItem>
            <Line w={30} h={30} stroke={2.5}>
              <path d="M2 3v9h9M3 12A12.500 12.500 0 1 1 5 22" />
            </Line>
            2
          </MetaItem>
          <MetaItem>
            <Line w={30} h={32} stroke={2.5}>
              <path d="M2 15v-3q0-5 5-5h20M21 1l6 6-6 6M28 17v3q0 5-5 5H3M9 31l-6-6 6-6" />
            </Line>
            98
          </MetaItem>
          <DetailsLink href="#details">
            <Line w={38} h={38} stroke={2.8}>
              <circle cx="19" cy="19" r="17" />
              <path d="M19 18v8M19 12v0" strokeWidth="4" />
            </Line>
            Details
          </DetailsLink>
        </Meta>
      </QuestionBar>
      <Question onSubmit={(e) => e.preventDefault()}>
        <Prompt>For the continuous distribution below, what does the shaded area represent?</Prompt>
        <DistributionGraph />
        <Choices>
          {choices.map((c) => (
            <li key={c}>
              <Choice>
                <Radio
                  type="radio"
                  name="answer"
                  checked={answer === c}
                  onChange={() => setAnswer(c)}
                />
                {c}
              </Choice>
            </li>
          ))}
        </Choices>
        <SubmitRow>
          <Button type="submit" $primary>
            Submit Question
          </Button>
        </SubmitRow>
      </Question>
    </Page>
  );
}

function App() {
  return (
    <>
      <GlobalStyle />
      <Desktop>
        <MenuBar>
          <MenuGroup $gap={43}>
            <MenuItem aria-label="Apple menu">
              <FaApple />
            </MenuItem>
            <MenuItem $bold>Safari</MenuItem>
            {menus.map((m) => (
              <MenuItem key={m}>{m}</MenuItem>
            ))}
          </MenuGroup>
          <MenuGroup $gap={38}>
            <StatusIcons />
            <Clock>Tue Oct 31  9:17 PM</Clock>
          </MenuGroup>
        </MenuBar>
        <Window>
          <BrowserToolbar />
          <TabBar>
            {tabs.map((t, i) => (
              <Tab key={i} $active={t.active}>
                {t.icon}
                {t.label}
              </Tab>
            ))}
          </TabBar>
          <HomeworkPage />
        </Window>
        <Dock />
        <Wallpaper aria-hidden="true">
          {/* one noise channel drives all three colours, so the grass stays olive */}
          <filter id="grass" x="0" y="0" width="100%" height="100%" colorInterpolationFilters="sRGB">
            <feTurbulence type="fractalNoise" baseFrequency="0.05 0.09" numOctaves="4" seed="7" />
            <feColorMatrix values="1.5 0 0 0 -0.48  1.25 0 0 0 -0.4  0.4 0 0 0 -0.13  0 0 0 0 1" />
          </filter>
          <linearGradient id="dusk">
            <stop offset="0" stopColor="#0b0d07" stopOpacity="0.8" />
            <stop offset="0.4" stopColor="#0b0d07" stopOpacity="0.7" />
            <stop offset="0.55" stopColor="#2c260d" stopOpacity="0.2" />
            <stop offset="0.78" stopColor="#2c260d" stopOpacity="0.2" />
            <stop offset="0.86" stopColor="#0b0d07" stopOpacity="0.8" />
            <stop offset="1" stopColor="#0b0d07" stopOpacity="0.85" />
          </linearGradient>
          <rect width="100%" height="160" filter="url(#grass)" />
          <rect width="100%" height="160" fill="url(#dusk)" />
          <rect width="100%" height="50" fill="#0a0c06" fillOpacity="0.8" />
        </Wallpaper>
      </Desktop>
    </>
  );
}

export default App;
